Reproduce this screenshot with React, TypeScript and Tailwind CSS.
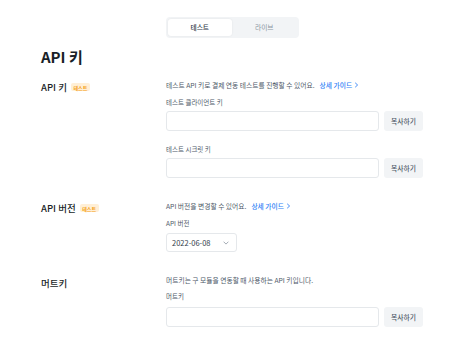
import React from "react";

const FONT = { fontFamily: '"Noto Sans CJK KR", "Noto Sans", sans-serif' };

function Badge() {
  return (
    <span className="ml-[4px] inline-flex h-[8px] w-[19px] items-center justify-center rounded-[2px] bg-[#ffefd6] text-[5px] font-semibold leading-none text-[#f5a012]">
      테스트
    </span>
  );
}

function Guide() {
  return (
    <span className="ml-[5px] inline-flex items-center font-medium text-[#3182f6]">
      상세 가이드
      <svg width="5" height="6" viewBox="0 0 5 6" className="ml-[2px]">
        <path d="M1.2 0.8 L3.6 3 L1.2 5.2" fill="none" stroke="#3182f6" strokeWidth="0.9" />
      </svg>
    </span>
  );
}

function KeyRow() {
  return (
    <div className="flex h-[20px] gap-[5px]">
      <div className="h-full flex-1 rounded-[3px] border border-[#e5e8eb] bg-white" />
      <button className="flex h-full w-[39px] items-center justify-center rounded-[3px] bg-[#f2f4f6] text-[6.75px] font-medium text-[#4e5968]">
        복사하기
      </button>
    </div>
  );
}

export default function App() {
  return (
    <div className="h-[342px] w-[474px] overflow-hidden bg-white" style={FONT}>
      <div className="flex flex-col pl-[41px] pr-[51px]">
        <div className="mt-[17px] flex justify-center">
          <div className="flex h-[21px] w-[133px] rounded-[4px] bg-[#f2f4f6] p-[2px]">
            <div className="flex flex-1 items-center justify-center rounded-[3px] bg-white text-[6.75px] font-medium text-[#333d4b] shadow-[0_0_2px_rgba(0,0,0,0.08)]">
              테스트
            </div>
            <div className="flex flex-1 items-center justify-center text-[6.75px] text-[#8b95a1]">
              라이브
            </div>
          </div>
        </div>

        <h1 className="mt-[9px] h-[20px] text-[15px] font-semibold leading-[20px] text-[#191f28]">
          API 키
        </h1>

        {/* Section 1 */}
        <div className="mt-[13px] flex">
          <div className="flex h-[14px] w-[125px] items-center">
            <span className="text-[9.5px] font-medium text-[#191f28]">API 키</span>
            <Badge />
          </div>
          <div className="flex flex-1 flex-col">
            <div className="flex h-[10px] items-center text-[6.75px] text-[#4e5968]">
              테스트 API 키로 결제 연동 테스트를 진행할 수 있어요.
              <Guide />
            </div>
            <div className="mt-[8px] flex h-[10px] items-center text-[6.5px] text-[#4e5968]">
              테스트 클라이언트 키
            </div>
            <div className="mt-[3px]">
              <KeyRow />
            </div>
            <div className="mt-[14px] flex h-[10px] items-center text-[6.5px] text-[#4e5968]">
              테스트 시크릿 키
            </div>
            <div className="mt-[3px]">
              <KeyRow />
            </div>
          </div>
        </div>

        {/* Section 2 */}
        <div className="mt-[23px] flex">
          <div className="flex h-[14px] w-[125px] items-center">
            <span className="text-[9.5px] font-medium text-[#191f28]">API 버전</span>
            <Badge />
          </div>
          <div className="flex flex-1 flex-col">
            <div className="flex h-[10px] items-center text-[6.75px] text-[#4e5968]">
              API 버전을 변경할 수 있어요.
              <Guide />
            </div>
            <div className="mt-[8px] flex h-[10px] items-center text-[6.5px] text-[#4e5968]">
              API 버전
            </div>
            <div className="mt-[4px] flex h-[19px] w-[71px] items-center justify-between rounded-[3px] border border-[#e5e8eb] bg-white pl-[5px] pr-[7px]">
              <span className="text-[7.5px] text-[#333d4b]">2022-06-08</span>
              <svg width="6" height="4" viewBox="0 0 6 4">
                <path d="M0.6 0.7 L3 3.1 L5.4 0.7" fill="none" stroke="#8b95a1" strokeWidth="0.8" />
              </svg>
            </div>
          </div>
        </div>

        {/* Section 3 */}
        <div className="mt-[23px] flex">
          <div className="flex h-[14px] w-[125px] items-center pt-[2px]">
            <span className="text-[9.5px] font-medium text-[#191f28]">머트키</span>
          </div>
          <div className="flex flex-1 flex-col">
            <div className="flex h-[10px] items-center text-[6.75px] text-[#4e5968]">
              머트키는 구 모듈을 연동할 때 사용하는 API 키입니다.
            </div>
            <div className="mt-[7px] flex h-[10px] items-center text-[6.5px] text-[#4e5968]">
              머트키
            </div>
            <div className="mt-[5px]">
              <KeyRow />
            </div>
          </div>
        </div>
      </div>
    </div>
  );
}
